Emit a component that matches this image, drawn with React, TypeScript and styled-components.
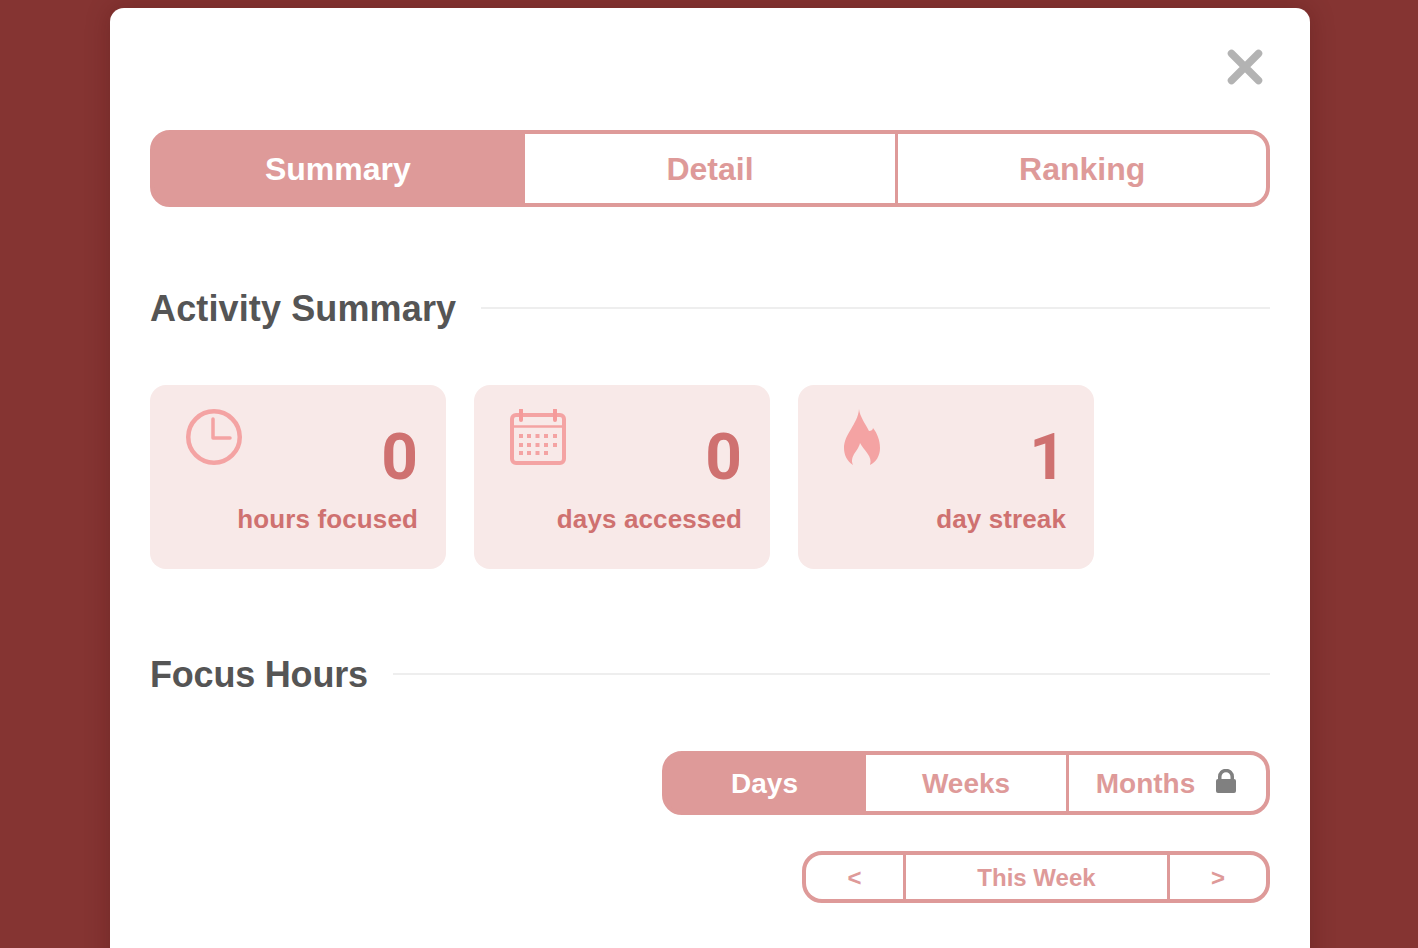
import React from "react";
import styled, { createGlobalStyle } from "styled-components";

const Global = createGlobalStyle`
  html, body { margin: 0; padding: 0; height: 100%; overflow: hidden; background: #853432; }
  body { font-family: "Liberation Sans", Arial, sans-serif; }
`;

const Page = styled.div`
  height: 948px;
  overflow: hidden;
  display: flex;
  justify-content: center;
  padding: 8px 0 0 2px;
  box-sizing: border-box;
  background: #853432;
`;

const Modal = styled.section`
  width: 1200px;
  height: 1100px;
  flex: none;
  box-sizing: border-box;
  padding: 41px 40px 40px;
  background: #fff;
  border-radius: 14px;
  box-shadow: 0 0 24px rgba(60, 10, 10, 0.28);
`;

const CloseRow = styled.div`
  display: flex;
  justify-content: flex-end;
  padding-right: 7px;
  height: 36px;
  margin-bottom: 45px;
`;

const CloseButton = styled.button`
  width: 36px;
  height: 36px;
  padding: 0;
  border: 0;
  background: none;
  display: block;
`;

const Segments = styled.div<{ $height: number; $align?: boolean; $columns: string; $width?: number }>`
  display: grid;
  grid-template-columns: ${(p) => p.$columns};
  height: ${(p) => p.$height}px;
  width: ${(p) => (p.$width ? `${p.$width}px` : "auto")};
  margin-left: ${(p) => (p.$align ? "auto" : "0")};
  box-sizing: border-box;
  border: 4px solid #de9a99;
  border-radius: 20px;
  overflow: hidden;
  background: #de9a99;
`;

const Segment = styled.div<{ $active?: boolean; $size: number; $divider?: boolean }>`
  display: flex;
  align-items: center;
  justify-content: center;
  gap: 21px;
  box-sizing: border-box;
  padding-top: 2px;
  padding-right: ${(p) => (p.$active ? "3px" : "0")};
  font-size: ${(p) => p.$size}px;
  font-weight: 700;
  color: ${(p) => (p.$active ? "#fff" : "#de9a99")};
  background: ${(p) => (p.$active ? "#de9a99" : "#fff")};
  border-left: ${(p) => (p.$divider ? "3px solid #de9a99" : "0")};
`;

const LockedSegment = styled(Segment)`
  padding-right: 3px;
`;

const SectionHead = styled.div<{ $top: number }>`
  display: flex;
  align-items: center;
  gap: 25px;
  margin-top: ${(p) => p.$top}px;
  margin-bottom: 56px;
`;

const SectionTitle = styled.h2<{ $tracking: number }>`
  margin: 0;
  font-size: 36px;
  line-height: 41px;
  font-weight: 700;
  letter-spacing: ${(p) => p.$tracking}px;
  color: #555;
  white-space: nowrap;
`;

const Rule = styled.div`
  flex: 1;
  height: 2px;
  margin-bottom: 2px;
  background: #eee;
`;

const Cards = styled.div`
  display: flex;
  gap: 28px;
`;

const Card = styled.article`
  width: 296px;
  height: 184px;
  box-sizing: border-box;
  padding: 24px 28px 0 36px;
  display: flex;
  background: #f8e9e8;
  border-radius: 16px;
`;

const IconSlot = styled.div`
  width: 56px;
  height: 56px;
  flex: none;
  color: #f4a3a3;
`;

const Stats = styled.div`
  flex: 1;
  min-width: 0;
  display: flex;
  flex-direction: column;
  align-items: flex-end;
`;

const Value = styled.div`
  font-family: Roboto, "Liberation Sans", sans-serif;
  font-size: 64px;
  line-height: 64px;
  margin-top: 17px;
  font-weight: 700;
  color: #cf7170;
`;

const Label = styled.div`
  font-size: 26px;
  line-height: 30px;
  margin-top: 14px;
  font-weight: 700;
  letter-spacing: 0.12px;
  color: #cf7170;
  white-space: nowrap;
`;

const NavGap = styled.div`
  height: 36px;
`;

const LockIcon = styled.svg`
  margin-bottom: 6px;
  flex: none;
`;

const Clock = () => (
  <svg width="56" height="56" viewBox="0 0 56 56" fill="none" stroke="currentColor" strokeWidth="4.5" strokeLinecap="round" strokeLinejoin="round">
    <circle cx="28" cy="28" r="25.75" />
    <path d="M27 10V29H44" strokeWidth="3.5" />
  </svg>
);

const dots = [27, 36, 44].flatMap((y, r) =>
  [11, 19, 27.5, 36, 45].slice(0, r === 2 ? 4 : 5).map((x) => ({ x, y }))
);

const Calendar = () => (
  <svg width="56" height="56" viewBox="0 0 56 56" fill="none" stroke="currentColor">
    <rect x="2" y="6" width="52" height="48" rx="4" strokeWidth="4" />
    <path d="M2 17.5H54" strokeWidth="2.5" />
    <path d="M11 1V11M45 1V11" strokeWidth="4" stroke="#f59a9a" strokeLinecap="round" />
    {dots.map((d) => (
      <rect key={`${d.x}-${d.y}`} x={d.x - 2} y={d.y - 2} width="4" height="4" fill="currentColor" stroke="none" />
    ))}
  </svg>
);

const Flame = () => (
  <svg width="56" height="56" viewBox="0 0 56 56">
    <path
      transform="translate(10 0)"
      fill="currentColor"
      d="M15 0C16 8 21 14 25 22C27 22 29 21 29 19C33 24 36 31 36 39C36 47 32 53 26 56C29 47 20 42 16 34C15 41 5 47 9 56C3 52 0 46 0 39C0 25 14 15 15 0Z"
    />
  </svg>
);

const Lock = () => (
  <LockIcon width="20" height="24" viewBox="0 0 20 24" fill="none">
    <path d="M3.75 11V7.75a6.25 6.25 0 0 1 12.5 0V11" stroke="#808080" strokeWidth="3.5" />
    <rect x="0" y="10" width="20" height="14" rx="2" fill="#808080" />
  </LockIcon>
);

const stats = [
  { icon: <Clock />, value: "0", label: "hours focused" },
  { icon: <Calendar />, value: "0", label: "days accessed" },
  { icon: <Flame />, value: "1", label: "day streak" },
];

export default function App() {
  return (
    <Page>
      <Global />
      <Modal>
        <CloseRow>
          <CloseButton aria-label="Close">
            <svg width="36" height="36" viewBox="0 0 36 36" stroke="#b3b3b3" strokeWidth="7.5" strokeLinecap="round">
              <path d="M4.5 4.5L31.5 31.5M31.5 4.5L4.5 31.5" />
            </svg>
          </CloseButton>
        </CloseRow>

        <Segments $height={77} $columns="1fr 1fr 1fr">
          <Segment $active $size={32}>Summary</Segment>
          <Segment $size={32}>Detail</Segment>
          <Segment $size={32} $divider>Ranking</Segment>
        </Segments>

        <SectionHead $top={81}>
          <SectionTitle $tracking={0.13}>Activity Summary</SectionTitle>
          <Rule />
        </SectionHead>

        <Cards>
          {stats.map((s) => (
            <Card key={s.label}>
              <IconSlot>{s.icon}</IconSlot>
              <Stats>
                <Value>{s.value}</Value>
                <Label>{s.label}</Label>
              </Stats>
            </Card>
          ))}
        </Cards>

        <SectionHead $top={85}>
          <SectionTitle $tracking={-0.2}>Focus Hours</SectionTitle>
          <Rule />
        </SectionHead>

        <Segments $height={64} $columns="1fr 1fr 1fr" $width={608} $align>
          <Segment $active $size={28}>Days</Segment>
          <Segment $size={28}>Weeks</Segment>
          <LockedSegment $size={28} $divider>
            Months
            <Lock />
          </LockedSegment>
        </Segments>

        <NavGap />

        <Segments $height={52} $columns="97px 264px 99px" $width={468} $align>
          <Segment $size={24}>&lt;</Segment>
          <Segment $size={24} $divider>This Week</Segment>
          <Segment $size={24} $divider>&gt;</Segment>
        </Segments>
      </Modal>
    </Page>
  );
}
